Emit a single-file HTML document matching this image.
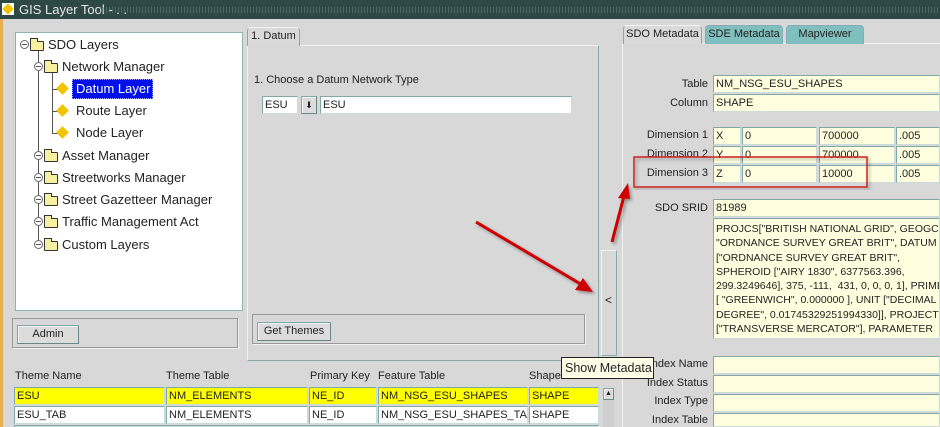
<!DOCTYPE html>
<html style="overflow:hidden;width:940px;height:427px"><head><meta charset="utf-8"><style>
*{box-sizing:border-box;margin:0;padding:0}
body{width:940px;height:427px;overflow:hidden;background:#d8d8d8;font-family:"Liberation Sans",sans-serif;position:relative;font-size:11px;color:#222}
.a{position:absolute}
.f{position:absolute;background:#ffffe0;border:1px solid #7fa8a6;border-right-color:#c9dcdb;border-bottom-color:#c9dcdb;height:18px;padding-left:2px;line-height:16px;font-size:11px;white-space:nowrap;overflow:hidden}
.w{background:#fff}
.y{background:#ffff00}
.l{position:absolute;text-align:right;width:100px;font-size:11px;line-height:16px}
.t{position:absolute;font-size:13px;line-height:18px;color:#222;white-space:nowrap}
.fd{position:absolute;width:14px;height:10px;background:#f6f0a0;border:1px solid #333;border-radius:1px}
.fd:before{content:"";position:absolute;left:-1px;top:-4px;width:6px;height:3px;border:1px solid #333;border-bottom:none;background:#f6f0a0}
.ex{position:absolute;width:9px;height:9px;border:1px solid #666;border-radius:50%;background:#fff}
.ex:after{content:"";position:absolute;left:1px;top:3px;width:5px;height:1px;background:#555}
.dm{position:absolute;width:9px;height:9px;background:#f2c400;transform:rotate(45deg)}
.btn{position:absolute;border:1px solid #7fa8a6;border-right-color:#6a8886;border-bottom-color:#6a8886;background:#dcdcdc;box-shadow:inset 1px 1px 0 #f4f4f4;font-size:11px;text-align:center;line-height:17px}
.tab{position:absolute;height:19px;border:1px solid #8ab;border-bottom:none;border-radius:4px 4px 0 0;font-size:11px;line-height:17px;text-align:center}
.h{position:absolute;font-size:11px;top:370px}
</style></head><body>
<div class="a" style="left:0;top:0;width:940px;height:19px;background:#2e4846"></div>
<div class="a" style="left:2px;top:3px;width:12px;height:12px;background:#fff"></div>
<div class="a" style="left:4px;top:5px;width:8px;height:8px;background:#f2c400;transform:rotate(45deg)"></div>
<div class="a" style="left:19px;top:1px;color:#e8e8e8;font-size:13px;line-height:17px">GIS Layer Tool - . .</div>
<div class="a" style="left:100px;top:7px;width:840px;height:6px;background:repeating-linear-gradient(90deg,#6c8a88 0 1px,transparent 1px 3px);opacity:.5"></div>
<div class="a" style="left:0;top:19px;width:3px;height:408px;background:#e6b050"></div>

<!-- tree -->
<div class="a" style="left:15px;top:32px;width:228px;height:279px;background:#fff;border:1px solid #8fb3b1"></div>
<div class="a" style="left:38px;top:50px;width:1px;height:196px;background:#555"></div>
<div class="a" style="left:52px;top:72px;width:1px;height:62px;background:#555"></div>
<div class="ex" style="left:20px;top:40px"></div><div class="fd" style="left:30px;top:41px"></div><div class="t" style="left:48px;top:36px">SDO Layers</div>
<div class="ex" style="left:34px;top:62px"></div><div class="fd" style="left:44px;top:63px"></div><div class="t" style="left:62px;top:58px">Network Manager</div>
<div class="a" style="left:52px;top:89px;width:8px;height:1px;background:#555"></div><div class="dm" style="left:58px;top:84px"></div>
<div class="a" style="left:72px;top:79px;width:81px;height:20px;background:#0010e8;border:1px dotted #aaf"></div><div class="t" style="left:76px;top:80px;color:#fff">Datum Layer</div>
<div class="a" style="left:52px;top:111px;width:8px;height:1px;background:#555"></div><div class="dm" style="left:58px;top:106px"></div><div class="t" style="left:76px;top:102px">Route Layer</div>
<div class="a" style="left:52px;top:133px;width:8px;height:1px;background:#555"></div><div class="dm" style="left:58px;top:128px"></div><div class="t" style="left:76px;top:124px">Node Layer</div>
<div class="ex" style="left:34px;top:151px"></div><div class="fd" style="left:44px;top:152px"></div><div class="t" style="left:62px;top:147px">Asset Manager</div>
<div class="ex" style="left:34px;top:173px"></div><div class="fd" style="left:44px;top:174px"></div><div class="t" style="left:62px;top:169px">Streetworks Manager</div>
<div class="ex" style="left:34px;top:195px"></div><div class="fd" style="left:44px;top:196px"></div><div class="t" style="left:62px;top:191px">Street Gazetteer Manager</div>
<div class="ex" style="left:34px;top:217px"></div><div class="fd" style="left:44px;top:218px"></div><div class="t" style="left:62px;top:213px">Traffic Management Act</div>
<div class="ex" style="left:34px;top:240px"></div><div class="fd" style="left:44px;top:241px"></div><div class="t" style="left:62px;top:236px">Custom Layers</div>

<div class="a" style="left:12px;top:318px;width:226px;height:30px;border:1px solid #999;box-shadow:1px 1px 0 #f2f2f2"></div>
<div class="btn" style="left:17px;top:325px;width:62px;height:19px">Admin</div>

<!-- middle -->
<div class="a" style="left:247px;top:45px;width:352px;height:316px;border:1px solid #f2f2f2;border-right-color:#8aa;border-bottom-color:#8aa"></div>
<div class="tab" style="left:247px;top:27px;width:53px;background:#dadada;border-color:#f4f4f4 #8aa">1. Datum</div>
<div class="a" style="left:254px;top:74px;font-size:11px">1. Choose a Datum Network Type</div>
<div class="f w" style="left:262px;top:96px;width:36px">ESU</div>
<div class="btn" style="left:301px;top:96px;width:16px;height:18px;line-height:16px;font-size:9px">&#11015;</div>
<div class="f w" style="left:320px;top:96px;width:252px">ESU</div>
<div class="a" style="left:252px;top:314px;width:333px;height:30px;border:1px solid #999;box-shadow:1px 1px 0 #f2f2f2"></div>
<div class="btn" style="left:257px;top:322px;width:74px;height:19px">Get Themes</div>
<div class="a" style="left:601px;top:250px;width:16px;height:106px;border:1px solid #f4f4f4;border-right-color:#8aa;border-bottom-color:#8aa"></div>
<div class="a" style="left:605px;top:293px;font-size:12px">&lt;</div>

<!-- right -->
<div class="a" style="left:622px;top:43px;width:318px;height:384px;border-left:1px solid #f2f2f2;border-top:1px solid #f2f2f2"></div>
<div class="tab" style="left:623px;top:25px;width:79px;background:#dadada;border-color:#f4f4f4 #8aa">SDO Metadata</div>
<div class="tab" style="left:705px;top:25px;width:78px;background:#7fbfbd">SDE Metadata</div>
<div class="tab" style="left:786px;top:25px;width:78px;background:#7fbfbd">Mapviewer</div>
<div class="l" style="left:608px;top:76px">Table</div><div class="f" style="left:713px;top:75px;width:227px">NM_NSG_ESU_SHAPES</div>
<div class="l" style="left:608px;top:95px">Column</div><div class="f" style="left:713px;top:94px;width:227px">SHAPE</div>
<div class="l" style="left:608px;top:127px">Dimension 1</div>
<div class="f" style="left:713px;top:127px;width:28px">X</div><div class="f" style="left:742px;top:127px;width:75px">0</div><div class="f" style="left:819px;top:127px;width:76px">700000</div><div class="f" style="left:896px;top:127px;width:44px">.005</div>
<div class="l" style="left:608px;top:146px">Dimension 2</div>
<div class="f" style="left:713px;top:146px;width:28px">Y</div><div class="f" style="left:742px;top:146px;width:75px">0</div><div class="f" style="left:819px;top:146px;width:76px">700000</div><div class="f" style="left:896px;top:146px;width:44px">.005</div>
<div class="l" style="left:608px;top:165px">Dimension 3</div>
<div class="f" style="left:713px;top:165px;width:28px">Z</div><div class="f" style="left:742px;top:165px;width:75px">0</div><div class="f" style="left:819px;top:165px;width:76px">10000</div><div class="f" style="left:896px;top:165px;width:44px">.005</div>
<div class="l" style="left:608px;top:200px">SDO SRID</div><div class="f" style="left:713px;top:199px;width:227px">81989</div>
<div class="f" style="left:713px;top:218px;width:227px;height:121px;white-space:pre;line-height:14.3px;padding-top:3px;font-size:10.5px">PROJCS["BRITISH NATIONAL GRID", GEOGCS
"ORDNANCE SURVEY GREAT BRIT", DATUM
["ORDNANCE SURVEY GREAT BRIT",
SPHEROID ["AIRY 1830", 6377563.396,
299.3249646], 375, -111,  431, 0, 0, 0, 1], PRIME
[ "GREENWICH", 0.000000 ], UNIT ["DECIMAL
DEGREE", 0.01745329251994330]], PROJECTION
["TRANSVERSE MERCATOR"], PARAMETER</div>
<div class="l" style="left:608px;top:356px">Index Name</div><div class="f" style="left:713px;top:356px;width:227px"></div>
<div class="l" style="left:608px;top:375px">Index Status</div><div class="f" style="left:713px;top:375px;width:227px"></div>
<div class="l" style="left:608px;top:393px">Index Type</div><div class="f" style="left:713px;top:394px;width:227px"></div>
<div class="l" style="left:608px;top:412px">Index Table</div><div class="f" style="left:713px;top:413px;width:227px;height:14px"></div>

<!-- table -->
<div class="h" style="left:15px">Theme Name</div><div class="h" style="left:166px">Theme Table</div><div class="h" style="left:310px">Primary Key</div><div class="h" style="left:378px">Feature Table</div><div class="h" style="left:529px">Shape</div>
<div class="f y" style="left:14px;top:387px;width:151px">ESU</div><div class="f y" style="left:166px;top:387px;width:142px">NM_ELEMENTS</div><div class="f y" style="left:309px;top:387px;width:68px">NE_ID</div><div class="f y" style="left:378px;top:387px;width:150px">NM_NSG_ESU_SHAPES</div><div class="f y" style="left:529px;top:387px;width:70px">SHAPE</div>
<div class="f w" style="left:14px;top:406px;width:151px">ESU_TAB</div><div class="f w" style="left:166px;top:406px;width:142px">NM_ELEMENTS</div><div class="f w" style="left:309px;top:406px;width:68px">NE_ID</div><div class="f w" style="left:378px;top:406px;width:150px">NM_NSG_ESU_SHAPES_TABLE</div><div class="f w" style="left:529px;top:406px;width:70px">SHAPE</div>
<div class="f w" style="left:14px;top:425px;width:585px;height:2px"></div>
<div class="btn" style="left:603px;top:388px;width:11px;height:12px;font-size:7px;line-height:10px">&#9650;</div>
<div class="a" style="left:603px;top:400px;width:11px;height:27px;background:#cfcfcf"></div>

<!-- annotations -->
<svg class="a" style="left:0;top:0" width="940" height="427">
<defs><filter id="s"><feDropShadow dx="2" dy="2" stdDeviation="1.5" flood-opacity=".35"/></filter></defs>
<rect x="634" y="157" width="233" height="30" fill="none" stroke="#cc2020" stroke-width="1.5" filter="url(#s)"/>
<g filter="url(#s)" stroke="#c00" stroke-width="3" fill="#c00">
<line x1="476" y1="222" x2="584" y2="286"/><polygon points="593,292 575,290 583,278" stroke="none"/>
<line x1="612" y1="242" x2="624" y2="196"/><polygon points="628,183 618,198 630,199" stroke="none"/>
</g></svg>
<div class="a" style="left:561px;top:357px;width:93px;height:22px;background:#ffffe8;border:1px solid #222;font-size:12.5px;line-height:20px;padding-left:3px">Show Metadata</div>
</body></html>
